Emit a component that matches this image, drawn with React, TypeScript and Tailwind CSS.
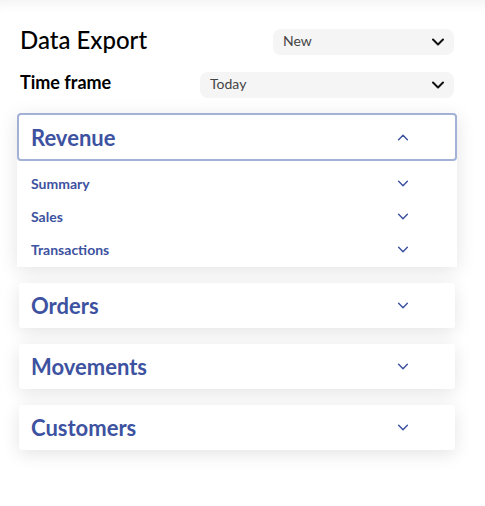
import React from "react";

const Chevron = ({ up = false, className = "" }: { up?: boolean; className?: string }) => (
  <svg viewBox="0 0 12 8" className={className} fill="none" stroke="currentColor" strokeLinecap="round" strokeLinejoin="round">
    {up ? <path d="M1 6.5 6 1.5 11 6.5" /> : <path d="M1 1.5 6 6.5 11 1.5" />}
  </svg>
);

const Select = ({ label, className }: { label: string; className: string }) => (
  <div className={`flex h-[26px] items-center justify-between rounded-[8px] bg-[#f5f5f5] pl-[10px] pr-[10px] ${className}`}>
    <span className="mb-[4px] text-[14px] text-[#444]">{label}</span>
    <Chevron className="h-[8px] w-[12px] text-[#111] [stroke-width:2]" />
  </div>
);

const Card = ({ title }: { title: string }) => (
  <div className="ml-[19px] mr-[30px] flex h-[45px] items-center justify-between rounded-[3px] bg-white pl-[12px] pr-[46px] shadow-[0_4px_18px_rgba(0,0,0,0.11)]">
    <span className="text-[22px] font-bold text-[#3d52a0]">{title}</span>
    <Chevron className="h-[7px] w-[12px] text-[#3d52a0] [stroke-width:1.7]" />
  </div>
);

export default function App() {
  return (
    <div
      className="min-h-[506px] w-[485px] bg-white shadow-[inset_0_12px_12px_-8px_rgba(0,0,0,0.05)]"
      style={{ fontFamily: "Lato, 'Noto Sans', sans-serif" }}
    >
      <div className="flex items-start justify-between pl-[20px] pr-[31px] pt-[29px]">
        <h1 className="text-[24px] font-medium leading-[22px] text-black">Data Export</h1>
        <Select label="New" className="w-[181px]" />
      </div>
      <div className="mt-[17px] flex items-start justify-between pl-[20px] pr-[31px]">
        <span className="text-[18px] font-bold leading-[20px] text-black">Time frame</span>
        <Select label="Today" className="w-[254px]" />
      </div>

      <div className="mt-[15px] flex flex-col gap-[16px]">
        <div className="ml-[17px] mr-[28px] shadow-[0_4px_18px_rgba(0,0,0,0.11)]">
          <div className="flex h-[48px] items-center justify-between rounded-[4px] border-2 border-[#a3b1d6] bg-white pl-[12px] pr-[46px]">
            <span className="text-[22px] font-bold text-[#3d52a0]">Revenue</span>
            <Chevron up className="h-[7px] w-[12px] text-[#3d52a0] [stroke-width:1.7]" />
          </div>
          <div className="mx-[2px] rounded-b-[3px] bg-white pb-[1px] pt-[6px]">
            {["Summary", "Sales", "Transactions"].map((s) => (
              <div key={s} className="flex h-[33px] items-center justify-between pl-[12px] pr-[46px]">
                <span className="text-[14px] font-bold text-[#3d52a0]">{s}</span>
                <Chevron className="h-[7px] w-[12px] text-[#3d52a0] [stroke-width:1.7]" />
              </div>
            ))}
          </div>
        </div>
        <Card title="Orders" />
        <Card title="Movements" />
        <Card title="Customers" />
      </div>
    </div>
  );
}
